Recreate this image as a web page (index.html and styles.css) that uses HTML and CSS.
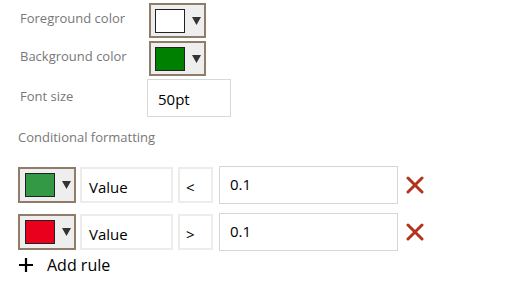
FILE: index.html
```html
<!DOCTYPE html>
<html lang="en">

<head>
  <meta charset="UTF-8">
  <meta name="viewport" content="width=device-width, initial-scale=1.0">
  <title>Formatting</title>

  <link rel="stylesheet" href="styles.css">
</head>

<body>
  <div class="format-panel">
    <div class="field">
      <span class="field__label">Foreground color</span>
      <button class="color-picker">
        <span class="color-picker__swatch" style="background: #ffffff"></span>
        <svg class="color-picker__arrow" width="9" height="8" viewBox="0 0 9 8"><polygon points="0,0 9,0 4.5,8" /></svg>
      </button>
    </div>

    <div class="field">
      <span class="field__label">Background color</span>
      <button class="color-picker">
        <span class="color-picker__swatch" style="background: #008000"></span>
        <svg class="color-picker__arrow" width="9" height="8" viewBox="0 0 9 8"><polygon points="0,0 9,0 4.5,8" /></svg>
      </button>
    </div>

    <div class="field field--input">
      <span class="field__label">Font size</span>
      <input class="text-input size-input" type="text" value="50pt">
    </div>

    <p class="section-title">Conditional formatting</p>

    <div class="rules">
      <div class="rule">
        <button class="color-picker color-picker--rule">
          <span class="color-picker__swatch" style="background: #339944"></span>
          <svg class="color-picker__arrow" width="9" height="8" viewBox="0 0 9 8"><polygon points="0,0 9,0 4.5,8" /></svg>
        </button>
        <div class="rule__field rule__field--value">Value</div>
        <div class="rule__field rule__field--op">&lt;</div>
        <input class="text-input rule__threshold" type="text" value="0.1">
        <button class="rule__delete" title="Remove">
          <svg width="18" height="18" viewBox="0 0 18 18"><path d="M2 2 L16 16 M16 2 L2 16" /></svg>
        </button>
      </div>

      <div class="rule">
        <button class="color-picker color-picker--rule">
          <span class="color-picker__swatch" style="background: #e8001c"></span>
          <svg class="color-picker__arrow" width="9" height="8" viewBox="0 0 9 8"><polygon points="0,0 9,0 4.5,8" /></svg>
        </button>
        <div class="rule__field rule__field--value">Value</div>
        <div class="rule__field rule__field--op">&gt;</div>
        <input class="text-input rule__threshold" type="text" value="0.1">
        <button class="rule__delete" title="Remove">
          <svg width="18" height="18" viewBox="0 0 18 18"><path d="M2 2 L16 16 M16 2 L2 16" /></svg>
        </button>
      </div>
    </div>

    <button class="add-rule">
      <svg width="16" height="16" viewBox="0 0 16 16"><path d="M8 1 V15 M1 8 H15" /></svg>
      <span>Add rule</span>
    </button>
  </div>
</body>

</html>
```

FILE: styles.css
```css
html {
  box-sizing: border-box;
}

*,
*:before,
*:after {
  box-sizing: inherit;
}

body {
  margin: 0;
  background: white;
  font-family: "Open Sans", "Noto Sans", sans-serif;
}

.format-panel {
  padding: 3px 0 0 18px;
}

.field {
  display: flex;
  align-items: center;
  margin-bottom: 3px;
}

.field__label {
  width: 131px;
  padding-left: 2px;
  padding-bottom: 6px;
  font-size: 13px;
  color: #777;
}

.field--input .field__label {
  width: 129px;
  padding-bottom: 4px;
}

.color-picker {
  display: flex;
  align-items: center;
  width: 57px;
  height: 35px;
  padding: 0 0 0 4px;
  background: #eee;
  border: 2px solid #8f7d69;
  cursor: pointer;
}

.color-picker__swatch {
  display: block;
  width: 30px;
  height: 24px;
  border: 1px solid #222;
}

.color-picker__arrow {
  margin-left: 7px;
  fill: #333;
}

.color-picker--rule {
  width: 58px;
  height: 36px;
  padding-left: 5px;
}

.text-input {
  outline: none;
  font-family: inherit;
  color: #000;
  background: white;
}

.size-input {
  width: 84px;
  height: 38px;
  padding: 2px 0 0 10px;
  border: 1px solid #d8d8d8;
  font-size: 15px;
}

.section-title {
  margin: 11px 0 0;
  font-size: 13px;
  color: #777;
}

.rules {
  display: flex;
  flex-direction: column;
  gap: 9px;
  margin-top: 20px;
}

.rule {
  display: flex;
  align-items: center;
}

.rule__field {
  display: flex;
  align-items: center;
  height: 36px;
  border: 2px solid #ececec;
  font-size: 15px;
  color: #000;
}

.rule__field--value {
  width: 93px;
  margin-left: 4px;
  padding: 3px 0 0 7px;
}

.rule__field--op {
  justify-content: flex-start;
  width: 35px;
  margin-left: 5px;
  padding: 4px 0 0 6px;
}

.rule__threshold {
  width: 179px;
  height: 38px;
  margin-left: 6px;
  padding: 0 0 2px 10px;
  border: 1px solid #d6d6d6;
  font-size: 15px;
}

.rule__delete {
  display: flex;
  margin-left: 8px;
  padding: 0;
  background: none;
  border: none;
  cursor: pointer;
}

.rule__delete path {
  stroke: #b4331c;
  stroke-width: 3;
  stroke-linecap: round;
  fill: none;
}

.add-rule {
  display: flex;
  align-items: center;
  gap: 13px;
  margin-top: 3px;
  padding: 0;
  background: none;
  border: none;
  font-family: inherit;
  font-size: 16px;
  color: #000;
  cursor: pointer;
}

.add-rule path {
  stroke: #000;
  stroke-width: 2.2;
  fill: none;
}
```
